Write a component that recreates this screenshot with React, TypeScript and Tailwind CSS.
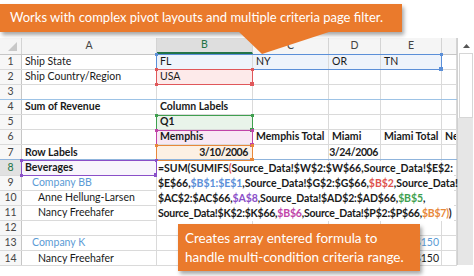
import type { ReactNode } from "react";

// column widths: row header, A..F
const colW = ["w-[22px]", "w-[135px]", "w-[96px]", "w-[76px]", "w-[52px]", "w-[61px]", "w-[15px]"];
const letters = ["A", "B", "C", "D", "E", ""];

type Cell = { t?: ReactNode; cls?: string };
type Row = { n: number; cells: Cell[]; rowCls?: string; numCls?: string };

const bold = "font-bold";
const blueFill = "bg-[#eef3fb]";

const rows: Row[] = [
  {
    n: 1,
    cells: [
      { t: "Ship State" },
      { t: "FL", cls: blueFill },
      { t: "NY", cls: blueFill },
      { t: "OR", cls: blueFill },
      { t: "TN", cls: blueFill },
      {},
    ],
  },
  { n: 2, cells: [{ t: "Ship Country/Region" }, { t: "USA", cls: "bg-[#fdeaea]" }, {}, {}, {}, {}] },
  { n: 3, cells: [{}, {}, {}, {}, {}, {}], rowCls: "border-b-[#9dc3e6]" },
  {
    n: 4,
    cells: [{ t: "Sum of Revenue", cls: bold }, { t: "Column Labels", cls: bold }, {}, {}, {}, {}],
  },
  { n: 5, cells: [{}, { t: "Q1", cls: `${bold} bg-[#e9f4ea]` }, {}, {}, {}, {}] },
  {
    n: 6,
    cells: [
      {},
      { t: "Memphis", cls: `${bold} bg-[#f8e8f4]` },
      { t: "Memphis Total", cls: bold },
      { t: "Miami", cls: bold },
      { t: "Miami Total", cls: bold },
      { t: "Ne", cls: bold },
    ],
  },
  {
    n: 7,
    cells: [
      { t: "Row Labels", cls: bold },
      { t: "3/10/2006", cls: `${bold} justify-end pr-[4px] tracking-[-0.4px] bg-[#fcf0e4]` },
      {},
      { t: "3/24/2006", cls: `${bold} justify-end pr-[2px] tracking-[-0.4px]` },
      {},
      {},
    ],
    rowCls: "border-b-[#8fb4dc]",
  },
  {
    n: 8,
    cells: [{ t: "Beverages", cls: `${bold} bg-[#f8f5fc]` }, {}, {}, {}, {}, {}],
    numCls: "bg-[#e1e1e1] text-[#217346]",
  },
  { n: 9, cells: [{ t: "Company BB", cls: "pl-[10px] text-[#5b9bd5]" }, {}, {}, {}, {}, {}] },
  { n: 10, cells: [{ t: "Anne Hellung-Larsen", cls: "pl-[16px]" }, {}, {}, {}, {}, {}] },
  { n: 11, cells: [{ t: "Nancy Freehafer", cls: "pl-[16px]" }, {}, {}, {}, {}, {}] },
  { n: 12, cells: [{}, {}, {}, {}, {}, {}] },
  {
    n: 13,
    cells: [
      { t: "Company K", cls: "pl-[10px] text-[#5b9bd5]" },
      {},
      {},
      {},
      { t: "$150", cls: "justify-end pr-[2px] text-[#5b9bd5]" },
      {},
    ],
  },
  {
    n: 14,
    cells: [
      { t: "Nancy Freehafer", cls: "pl-[16px]" },
      {},
      {},
      {},
      { t: "$150", cls: "justify-end pr-[2px]" },
      {},
    ],
  },
];

function RefBox({ cls, handle }: { cls: string; handle: string }) {
  return (
    <div className={`pointer-events-none absolute border ${cls}`}>
      <span className={`absolute -left-[2px] -top-[2px] h-[3px] w-[3px] ${handle}`} />
      <span className={`absolute -right-[2px] -top-[2px] h-[3px] w-[3px] ${handle}`} />
      <span className={`absolute -bottom-[2px] -left-[2px] h-[3px] w-[3px] ${handle}`} />
      <span className={`absolute -bottom-[2px] -right-[2px] h-[4px] w-[4px] ${handle}`} />
    </div>
  );
}

function Sheet() {
  return (
    <div className="relative w-[457px]">
      {/* column header */}
      <div className="flex h-[16.5px] border-b border-[#c6c6c6] bg-[#f5f5f5] text-[10.5px] text-[#444]">
        <div className={`${colW[0]} relative border-r border-[#d4d4d4]`}>
          <svg className="absolute bottom-[3px] right-[4px]" width="9" height="9" viewBox="0 0 9 9">
            <polygon points="9,0 9,9 0,9" fill="#c8c8c8" />
          </svg>
        </div>
        {letters.map((l, i) => (
          <div
            key={i}
            className={`${colW[i + 1]} flex items-center justify-center border-r border-[#d4d4d4] ${
              l === "B" ? "border-b-2 border-b-[#217346] bg-[#dedede] text-[#217346]" : ""
            }`}
          >
            {l}
          </div>
        ))}
      </div>

      {rows.map((r) => (
        <div key={r.n} className={`flex h-[15.15px] border-b border-[#dadada] ${r.rowCls ?? ""}`}>
          <div
            className={`${colW[0]} flex items-center justify-center border-r border-[#c6c6c6] text-[10.5px] ${
              r.numCls ?? "bg-[#f7f7f7] text-[#444]"
            }`}
          >
            {r.n}
          </div>
          {r.cells.map((c, i) => (
            <div
              key={i}
              className={`${colW[i + 1]} flex items-center overflow-hidden whitespace-nowrap border-r border-[#dadada] pl-[3px] text-[10.5px] text-[#1a1a1a] ${
                c.cls ?? ""
              }`}
            >
              {c.t}
            </div>
          ))}
        </div>
      ))}

      {/* formula references */}
      <RefBox cls="left-[156px] top-[16px] h-[16px] w-[286px] border-[#5b8fd8]" handle="bg-[#5b8fd8]" />
      <RefBox cls="left-[156px] top-[31px] h-[16px] w-[97px] border-[#e0575a]" handle="bg-[#e0575a]" />
      <RefBox cls="left-[156px] top-[77px] h-[16px] w-[97px] border-[#3f9f4f]" handle="bg-[#3f9f4f]" />
      <RefBox cls="left-[156px] top-[92px] h-[16px] w-[97px] border-[#c044a8]" handle="bg-[#c044a8]" />
      <RefBox cls="left-[156px] top-[107px] h-[16px] w-[97px] border-[#e8883a]" handle="bg-[#e8883a]" />
      <RefBox cls="left-[21px] top-[122px] h-[16px] w-[136px] border-[#8a4fc8]" handle="bg-[#8a4fc8]" />

      {/* in-cell formula editor */}
      <div className="absolute left-[157px] top-[123px] h-[60px] w-[297px] whitespace-nowrap bg-white pl-[1px] text-[10.5px] font-bold leading-[15.15px] text-[#1a1a1a]">
        <div>
          =SUM(SUMIFS<span className="text-[#e0534f]">(</span>Source_Data!$W$2:$W$66,Source_Data!$E$2:
        </div>
        <div className="tracking-[-0.05px]">
          $E$66,<span className="text-[#5b8fd8]">$B$1:$E$1</span>,Source_Data!$G$2:$G$66,
          <span className="text-[#e0534f]">$B$2</span>,Source_Data!
        </div>
        <div className="tracking-[-0.1px]">
          $AC$2:$AC$66,<span className="text-[#8a4fc8]">$A$8</span>,Source_Data!$AD$2:$AD$66,
          <span className="text-[#3f9f4f]">$B$5</span>,
        </div>
        <div className="tracking-[-0.22px]">
          Source_Data!$K$2:$K$66,<span className="text-[#c044a8]">$B$6</span>,Source_Data!$P$2:$P$66,
          <span className="text-[#e8883a]">$B$7)</span>)
        </div>
      </div>
    </div>
  );
}

function ScrollBar() {
  return (
    <div className="flex h-[227px] w-[17px] flex-col border-l border-[#d0d0d0] bg-white">
      <div className="flex h-[15px] items-center justify-center">
        <svg width="7" height="4" viewBox="0 0 7 4">
          <polygon points="3.5,0 7,4 0,4" fill="#555" />
        </svg>
      </div>
      <div className="mx-[1px] h-[65px] border border-[#d6d6d6] bg-white" />
      <div className="mr-[1px] flex-1 bg-[#e6e6e6]" />
    </div>
  );
}

export default function App() {
  return (
    <div className="relative h-[276px] w-[474px] overflow-hidden bg-white font-['Lato',sans-serif]">
      <div className="relative z-10 h-[38px] pt-[4px]">
        <div className="relative flex h-[28px] w-[402px] items-center bg-[#ea7a2c] pl-[10px] text-[13px] text-white shadow-[2px_3px_4px_rgba(0,0,0,0.35)]">
          Works with complex pivot layouts and multiple criteria page filter.
          <svg className="absolute left-[238px] top-[27px]" width="94" height="24" viewBox="0 0 94 24">
            <polygon points="0,0 94,0 24,23" fill="#ea7a2c" />
          </svg>
        </div>
      </div>

      <div className="flex">
        <Sheet />
        <ScrollBar />
      </div>

      <div className="absolute left-[178px] top-[224px] z-10 flex h-[47px] w-[242px] flex-col justify-center bg-[#ea7a2c] pl-[7px] text-[13.5px] leading-[19px] text-white shadow-[2px_3px_4px_rgba(0,0,0,0.35)]">
        <div>Creates array entered formula to</div>
        <div>handle multi-condition criteria range.</div>
      </div>
    </div>
  );
}
